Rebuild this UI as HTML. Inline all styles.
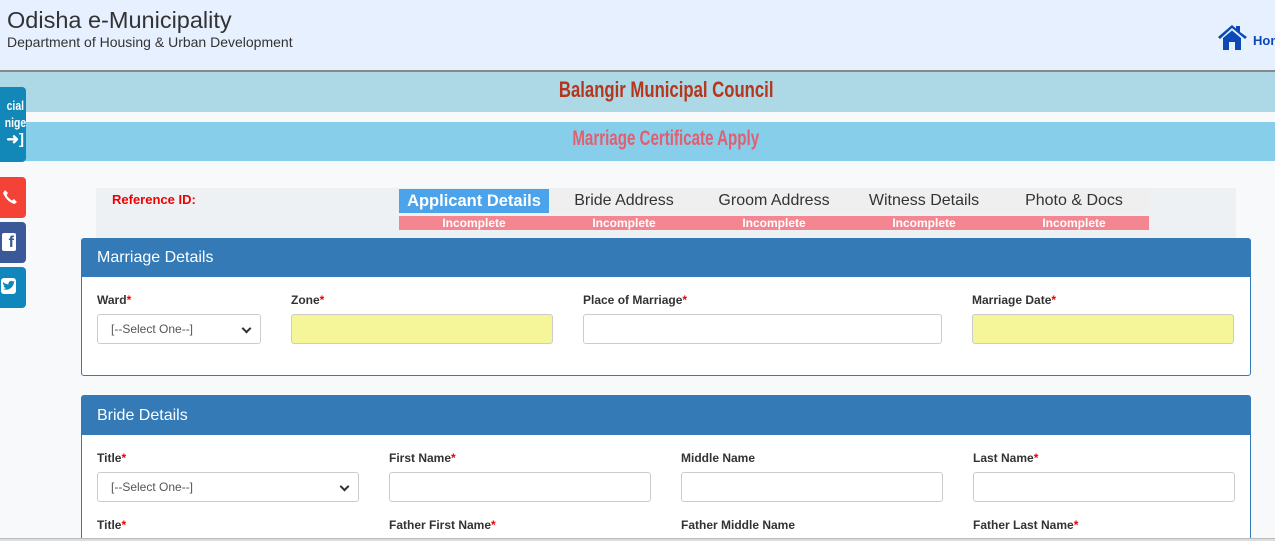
<!DOCTYPE html>
<html style="overflow:hidden;height:541px"><head><meta charset="utf-8"><style>
*{box-sizing:border-box;margin:0;padding:0}
body{width:1275px;height:541px;overflow:hidden;background:#f8f9fb;font-family:"Liberation Sans",Arial,sans-serif;position:relative;color:#333}
.a{position:absolute}
.hdr{left:0;top:0;width:1275px;height:72px;background:#e6f0fe;border-bottom:2px solid #888}
.band1{left:0;top:72px;width:1275px;height:40px;background:#add8e6}
.band2{left:0;top:122px;width:1275px;height:39px;background:#87ceeb}
.narrow{display:inline-block;font-family:"Liberation Sans Narrow","Liberation Sans",sans-serif;font-weight:bold;transform:scaleX(.76);transform-origin:center}
.tabbox{left:96px;top:188px;width:1140px;height:50px;background:#eef1f4}
.tab{top:189px;width:150px;height:24px;background:#efefef;text-align:center;font-size:16px;line-height:24px;color:#333}
.inc{top:216px;width:150px;height:14px;background:#f38690;color:#fff;font-size:12px;font-weight:bold;text-align:center;line-height:15px}
.panel{left:81px;width:1170px;background:#fff;border:1px solid #337ab7;border-radius:3px}
.ph{height:38px;background:#337ab7;color:#fff;font-size:16px;line-height:38px;padding-left:15px}
.lbl{font-size:12px;font-weight:bold;color:#333}
.lbl i{color:#e00;font-style:normal}
.in{height:30px;border:1px solid #ccc;border-radius:3px;background:#fff}
.y{background:#f5f59a}
.sel{font-size:12px;color:#555;line-height:28px;padding-left:13px}
.sel:after{content:"";position:absolute;right:10px;top:10px;width:5px;height:5px;border-right:2px solid #333;border-bottom:2px solid #333;transform:rotate(45deg)}
.side{left:0;width:26px;border-radius:0 4px 4px 0;color:#fff}
</style></head><body>
<div class="a hdr"></div>
<div class="a" style="left:7px;top:7px;font-size:23.5px;color:#333">Odisha e-Municipality</div>
<div class="a" style="left:7px;top:34px;font-size:14px;color:#333">Department of Housing &amp; Urban Development</div>
<svg class="a" style="left:1216px;top:23px" width="34" height="28" viewBox="0 0 34 28"><path d="M2 14 L16 2 L20 5.5 V3 H24 V9 L31 14 L29 16 L16 5 L4 16Z" fill="#0a49b6"/><path d="M7 15 L16 7.5 L25 15 V27 H19 V19 H13 V27 H7Z" fill="#0a49b6"/></svg>
<div class="a" style="left:1253px;top:33px;font-size:13px;font-weight:bold;color:#0a49b6">Home</div>
<div class="a band1"></div>
<div class="a band2"></div>
<div class="a" style="left:0;top:77px;width:1332px;text-align:center;font-size:22px;color:#b5361c"><span class="narrow">Balangir Municipal Council</span></div>
<div class="a" style="left:0;top:127px;width:1332px;text-align:center;font-size:21px;color:#e06070;"><span class="narrow" style="transform:scaleX(.72)">Marriage Certificate Apply</span></div>
<div class="a side" style="top:87px;height:75px;background:#1288b8;font-size:13px;font-weight:bold;line-height:17px;text-align:right;padding:10px 2px 0 0;overflow:hidden"><div style="white-space:nowrap;margin-left:-30px;transform:scaleX(.8);transform-origin:right">cial</div><div style="white-space:nowrap;transform:scaleX(.8);transform-origin:right">nige</div><div style="font-size:15px">&#10140;]</div></div>
<div class="a side" style="top:177px;height:41px;background:#f44336"><svg style="position:absolute;left:2px;top:12px" width="16" height="16" viewBox="0 0 16 16"><path d="M3 1 L6 4 L4.5 6 Q6.5 9.5 10 11.5 L12 10 L15 13 L12.5 15 Q5 13 1 4Z" fill="#fff"/></svg></div>
<div class="a side" style="top:222px;height:41px;background:#3b5998"><div style="position:absolute;left:2px;top:11px;width:14px;height:18px;background:#fff;border-radius:2px;color:#3b5998;font-weight:bold;font-size:16px;text-align:right;line-height:20px;padding-right:2px">f</div></div>
<div class="a side" style="top:267px;height:41px;background:#0f87bd"><div style="position:absolute;left:1px;top:11px;width:15px;height:16px;background:#fff;border-radius:3px"></div><svg style="position:absolute;left:2px;top:13px" width="13" height="12" viewBox="0 0 13 12"><path d="M1 9 Q5 11 9 8 Q12 5 12 2 L13 1 L11 1.5 Q9 0 7 2 Q6 3 6.5 4.5 Q3 4 1 2 Q0.5 4 2.5 6 L1.5 6 Q2.5 8 4 8 Q3 9 1 9Z" fill="#0f87bd"/></svg></div>
<div class="a tabbox"></div>
<div class="a" style="left:112px;top:192px;font-size:13px;font-weight:bold;color:#e00">Reference ID:</div>
<div class="a tab" style="left:399px;background:#4aa3eb;color:#fff;font-weight:bold;font-size:16.5px">Applicant Details</div>
<div class="a tab" style="left:549px">Bride Address</div>
<div class="a tab" style="left:699px">Groom Address</div>
<div class="a tab" style="left:849px">Witness Details</div>
<div class="a tab" style="left:999px">Photo &amp; Docs</div>
<div class="a" style="left:399px;top:216px;width:750px;height:14px;background:#f38690"></div>
<div class="a inc" style="left:399px">Incomplete</div>
<div class="a inc" style="left:549px">Incomplete</div>
<div class="a inc" style="left:699px">Incomplete</div>
<div class="a inc" style="left:849px">Incomplete</div>
<div class="a inc" style="left:999px">Incomplete</div>

<div class="a panel" style="top:238px;height:138px"><div class="ph">Marriage Details</div></div>
<div class="a lbl" style="left:97px;top:293px">Ward<i>*</i></div>
<div class="a lbl" style="left:291px;top:293px">Zone<i>*</i></div>
<div class="a lbl" style="left:583px;top:293px">Place of Marriage<i>*</i></div>
<div class="a lbl" style="left:972px;top:293px">Marriage Date<i>*</i></div>
<div class="a in sel" style="left:97px;top:314px;width:164px">[--Select One--]</div>
<div class="a in y" style="left:291px;top:314px;width:262px"></div>
<div class="a in" style="left:583px;top:314px;width:359px"></div>
<div class="a in y" style="left:972px;top:314px;width:262px"></div>

<div class="a panel" style="top:395px;height:150px"><div class="ph" style="height:39px;line-height:39px">Bride Details</div></div>
<div class="a lbl" style="left:97px;top:451px">Title<i>*</i></div>
<div class="a lbl" style="left:389px;top:451px">First Name<i>*</i></div>
<div class="a lbl" style="left:681px;top:451px">Middle Name</div>
<div class="a lbl" style="left:973px;top:451px">Last Name<i>*</i></div>
<div class="a in sel" style="left:97px;top:472px;width:262px">[--Select One--]</div>
<div class="a in" style="left:389px;top:472px;width:262px"></div>
<div class="a in" style="left:681px;top:472px;width:262px"></div>
<div class="a in" style="left:973px;top:472px;width:262px"></div>
<div class="a lbl" style="left:97px;top:518px">Title<i>*</i></div>
<div class="a lbl" style="left:389px;top:518px">Father First Name<i>*</i></div>
<div class="a lbl" style="left:681px;top:518px">Father Middle Name</div>
<div class="a lbl" style="left:973px;top:518px">Father Last Name<i>*</i></div>
<div class="a" style="left:0;top:538px;width:1275px;height:3px;background:#ddd;border-top:1px solid #bbb"></div>
</body></html>
